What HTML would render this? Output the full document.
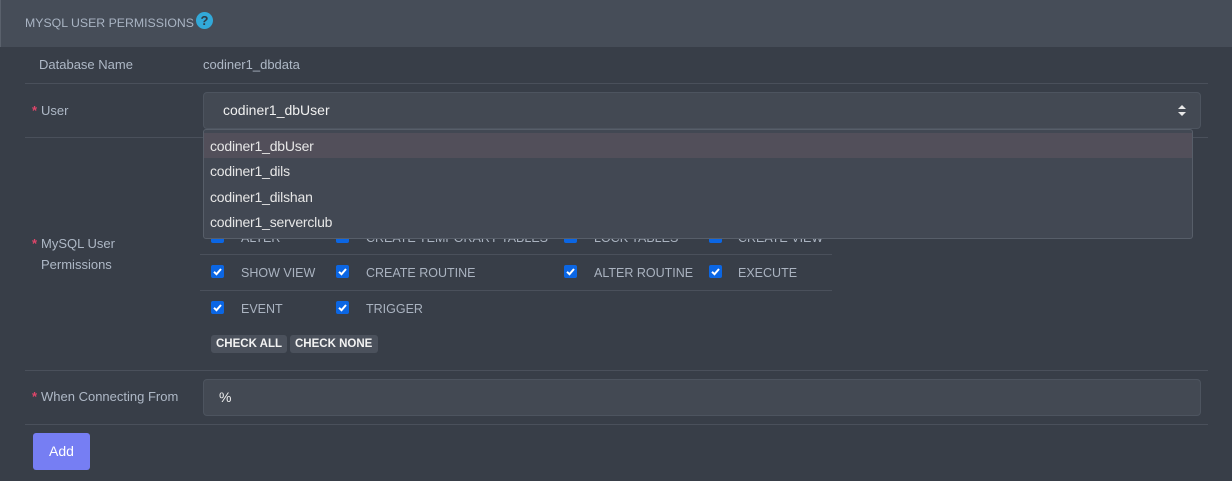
<!DOCTYPE html>
<html><head><style>
*{margin:0;padding:0;box-sizing:border-box}
body{width:1232px;height:481px;background:#383e48;font-family:"Liberation Sans",sans-serif;position:relative;overflow:hidden;color:#b6bfcc}
.a{position:absolute;white-space:nowrap}
.hdr{left:0;top:0;width:1232px;height:47px;background:#464d58;border-left:1px solid #5a616c}
.sep{height:1px;background:#4a505b}
.lbl{font-size:13px;color:#aeb8c6;line-height:16px}
.star{color:#e0456a;font-size:13px;position:absolute;left:-9px;top:0px;font-weight:bold}
.inp{background:#434953;border:1px solid #4d545f;border-radius:4px}
.cb{width:13px;height:13px;background:#0b66e4;border-radius:2px}
.cb svg{display:block}
.pl{font-size:12.5px;color:#aab3c0;line-height:16px}
.btn{background:#4b515c;border-radius:3px;color:#f2f2f2;font-weight:bold;font-size:11.5px;line-height:18px;padding:0 5px;top:335px;height:18px}
.dd{left:203px;top:129px;width:990px;height:110px;background:#424853;border:1px solid #575e69;border-radius:3px}
.it{position:absolute;left:6px;font-size:14px;color:#e6e6e6;line-height:16px;letter-spacing:-0.2px}
</style></head><body>
<div class="a hdr"></div>
<div class="a" style="left:25px;top:16px;font-size:12.3px;color:#a9b4c3">MYSQL USER PERMISSIONS</div>
<div class="a" style="left:196px;top:12px;width:17px;height:17px;border-radius:50%;background:#32a9d9;color:#2f3a46;font-weight:bold;font-size:13px;text-align:center;line-height:17px">?</div>

<div class="a lbl" style="left:39px;top:57px">Database Name</div>
<div class="a lbl" style="left:203px;top:57px">codiner1_dbdata</div>
<div class="a sep" style="left:25px;top:83px;width:1183px"></div>

<div class="a lbl" style="left:41px;top:103px"><span class="star">*</span>User</div>
<div class="a inp" style="left:203px;top:92px;width:998px;height:37px"></div>
<div class="a" style="left:223px;top:102px;font-size:14px;color:#f0f0f0">codiner1_dbUser</div>
<svg class="a" style="left:1177px;top:104px" width="10" height="13" viewBox="0 0 10 13"><path d="M5 1L9 5H1Z M5 12L9 8H1Z" fill="#e8e8e8"/></svg>
<div class="a sep" style="left:25px;top:137px;width:1183px"></div>

<div class="a lbl" style="left:41px;top:236px"><span class="star">*</span>MySQL User</div>
<div class="a lbl" style="left:41px;top:257px">Permissions</div>

<div class="a cb" style="left:211px;top:230px"></div>
<div class="a cb" style="left:336px;top:230px"></div>
<div class="a cb" style="left:564px;top:230px"></div>
<div class="a cb" style="left:709px;top:230px"></div>
<div class="a pl" style="left:241px;top:230px">ALTER</div>
<div class="a pl" style="left:366px;top:230px">CREATE TEMPORARY TABLES</div>
<div class="a pl" style="left:594px;top:230px">LOCK TABLES</div>
<div class="a pl" style="left:738px;top:230px">CREATE VIEW</div>
<div class="a sep" style="left:200px;top:254px;width:632px"></div>

<div class="a cb" style="left:211px;top:265px"><svg width="13" height="13"><path d="M3 6.8L5.5 9.2L10 4" stroke="#fff" stroke-width="2" fill="none"/></svg></div>
<div class="a cb" style="left:336px;top:265px"><svg width="13" height="13"><path d="M3 6.8L5.5 9.2L10 4" stroke="#fff" stroke-width="2" fill="none"/></svg></div>
<div class="a cb" style="left:564px;top:265px"><svg width="13" height="13"><path d="M3 6.8L5.5 9.2L10 4" stroke="#fff" stroke-width="2" fill="none"/></svg></div>
<div class="a cb" style="left:709px;top:265px"><svg width="13" height="13"><path d="M3 6.8L5.5 9.2L10 4" stroke="#fff" stroke-width="2" fill="none"/></svg></div>
<div class="a pl" style="left:241px;top:265px">SHOW VIEW</div>
<div class="a pl" style="left:366px;top:265px">CREATE ROUTINE</div>
<div class="a pl" style="left:594px;top:265px">ALTER ROUTINE</div>
<div class="a pl" style="left:738px;top:265px">EXECUTE</div>
<div class="a sep" style="left:200px;top:290px;width:632px"></div>

<div class="a cb" style="left:211px;top:301px"><svg width="13" height="13"><path d="M3 6.8L5.5 9.2L10 4" stroke="#fff" stroke-width="2" fill="none"/></svg></div>
<div class="a cb" style="left:336px;top:301px"><svg width="13" height="13"><path d="M3 6.8L5.5 9.2L10 4" stroke="#fff" stroke-width="2" fill="none"/></svg></div>
<div class="a pl" style="left:241px;top:301px">EVENT</div>
<div class="a pl" style="left:366px;top:301px">TRIGGER</div>

<div class="a btn" style="left:211px;width:76px">CHECK ALL</div>
<div class="a btn" style="left:290px;width:88px">CHECK NONE</div>

<div class="a dd">
<div class="a" style="left:0;top:3px;width:988px;height:25px;background:#524f5a"></div>
<div class="it" style="top:8px">codiner1_dbUser</div>
<div class="it" style="top:33px">codiner1_dils</div>
<div class="it" style="top:59px">codiner1_dilshan</div>
<div class="it" style="top:84px">codiner1_serverclub</div>
</div>

<div class="a sep" style="left:25px;top:370px;width:1183px"></div>
<div class="a lbl" style="left:41px;top:389px"><span class="star">*</span>When Connecting From</div>
<div class="a inp" style="left:203px;top:379px;width:998px;height:37px"></div>
<div class="a" style="left:219px;top:389px;font-size:14px;color:#f0f0f0">%</div>
<div class="a sep" style="left:25px;top:424px;width:1183px"></div>

<div class="a" style="left:33px;top:433px;width:57px;height:37px;background:#767ef3;border-radius:3px;color:#fff;font-size:14px;text-align:center;line-height:37px">Add</div>
</body></html>
